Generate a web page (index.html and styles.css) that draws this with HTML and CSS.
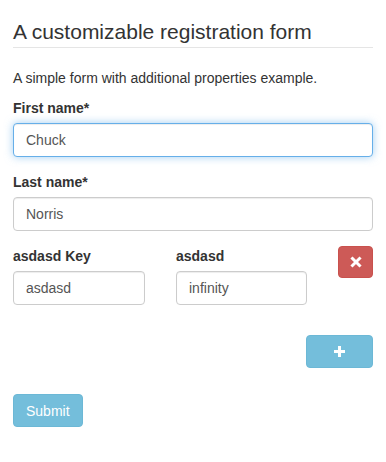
FILE: index.html
```html
<!DOCTYPE html>
<html lang="en">
<head>
    <meta charset="UTF-8">
    <meta name="viewport" content="width=device-width, initial-scale=1.0">
    <title>Registration Form</title>
    <link rel="stylesheet" href="styles.css">
</head>
<body>
    <form class="rjsf">
        <fieldset>
            <legend>A customizable registration form</legend>
            <p class="field-description">A simple form with additional properties example.</p>
            <div class="form-group">
                <label>First name*</label>
                <input class="form-control focused" type="text" value="Chuck">
            </div>
            <div class="form-group">
                <label>Last name*</label>
                <input class="form-control" type="text" value="Norris">
            </div>
            <div class="form-group additional-row">
                <div class="col-key">
                    <label>asdasd Key</label>
                    <input class="form-control" type="text" value="asdasd">
                </div>
                <div class="col-value">
                    <label>asdasd</label>
                    <input class="form-control" type="text" value="infinity">
                </div>
                <button type="button" class="btn btn-danger btn-remove">
                    <svg width="12" height="12" viewBox="0 0 12 12"><path d="M2.5 2.5 L9.5 9.5 M9.5 2.5 L2.5 9.5" stroke="#fff" stroke-width="3" stroke-linecap="square"/></svg>
                </button>
            </div>
            <div class="add-row">
                <button type="button" class="btn btn-info btn-add">
                    <svg width="13" height="13" viewBox="0 0 13 13"><path d="M6.5 1 V12 M1 6.5 H12" stroke="#fff" stroke-width="3"/></svg>
                </button>
            </div>
        </fieldset>
        <button type="submit" class="btn btn-info">Submit</button>
    </form>
</body>
</html>
```

FILE: styles.css
```css
* { margin: 0; padding: 0; box-sizing: border-box; }
body { font-family: "Liberation Sans", Arial, sans-serif; font-size: 14px; line-height: 20px; color: #333; background: #fff; padding: 17px 13px; }
.rjsf { width: 360px; }
fieldset { border: none; }
legend { display: block; width: 100%; font-size: 21px; line-height: 30px; color: #333; border-bottom: 1px solid #e5e5e5; margin-bottom: 20px; }
.field-description { margin-bottom: 10px; }
.form-group { margin-bottom: 15px; }
label { display: block; font-weight: bold; margin-bottom: 5px; }
.form-control { display: block; width: 100%; height: 34px; padding: 6px 12px; font-family: inherit; font-size: 14px; color: #555; background: #fff; border: 1px solid #ccc; border-radius: 4px; box-shadow: inset 0 1px 1px rgba(0,0,0,0.075); }
.form-control.focused { border-color: #66afe9; box-shadow: inset 0 1px 1px rgba(0,0,0,0.075), 0 0 8px rgba(102,175,233,0.6); outline: none; }
.additional-row { display: flex; align-items: flex-start; }
.col-key { width: 132px; margin-right: 31px; }
.col-value { width: 131px; margin-right: 31px; }
.btn { display: inline-flex; align-items: center; justify-content: center; height: 33px; padding: 6px 12px; font-family: inherit; font-size: 14px; color: #fff; border: 1px solid transparent; border-radius: 4px; cursor: pointer; }
.btn-danger { background: #cd5a57; border-color: #c9514d; }
.btn-info { background: #74bedb; border-color: #6cb8d6; }
.btn-remove { width: 35px; height: 32px; padding: 0; }
.add-row { display: flex; justify-content: flex-end; margin-top: 30px; margin-bottom: 26px; }
.btn-add { width: 67px; }
```
